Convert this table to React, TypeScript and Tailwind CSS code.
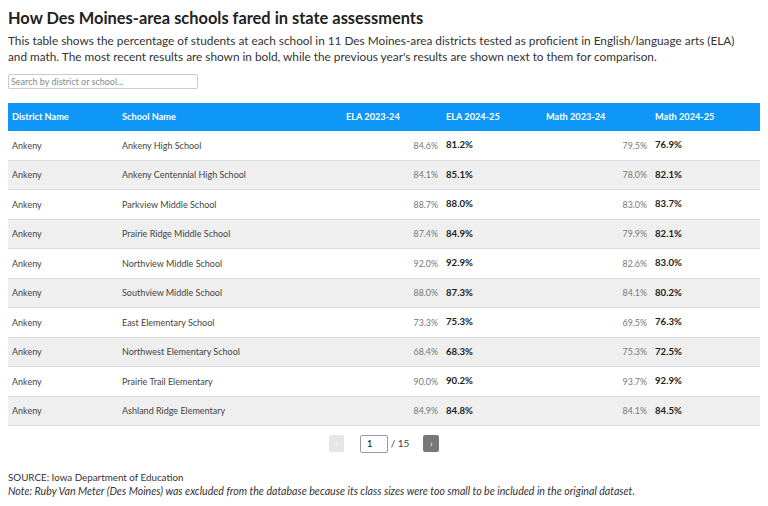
import React from "react";

const rows: [string, string, string, string, string, string][] = [
  ["Ankeny", "Ankeny High School", "84.6%", "81.2%", "79.5%", "76.9%"],
  ["Ankeny", "Ankeny Centennial High School", "84.1%", "85.1%", "78.0%", "82.1%"],
  ["Ankeny", "Parkview Middle School", "88.7%", "88.0%", "83.0%", "83.7%"],
  ["Ankeny", "Prairie Ridge Middle School", "87.4%", "84.9%", "79.9%", "82.1%"],
  ["Ankeny", "Northview Middle School", "92.0%", "92.9%", "82.6%", "83.0%"],
  ["Ankeny", "Southview Middle School", "88.0%", "87.3%", "84.1%", "80.2%"],
  ["Ankeny", "East Elementary School", "73.3%", "75.3%", "69.5%", "76.3%"],
  ["Ankeny", "Northwest Elementary School", "68.4%", "68.3%", "75.3%", "72.5%"],
  ["Ankeny", "Prairie Trail Elementary", "90.0%", "90.2%", "93.7%", "92.9%"],
  ["Ankeny", "Ashland Ridge Elementary", "84.9%", "84.8%", "84.1%", "84.5%"],
];

export default function App() {
  return (
    <div
      className="w-[768px] h-[506px] bg-white text-[#333] px-2 pt-[6px] overflow-hidden"
      style={{ fontFamily: "Lato, 'Noto Sans', sans-serif" }}
    >
      <h1 className="text-[16.4px] leading-[24px] font-bold text-[#222]">
        How Des Moines-area schools fared in state assessments
      </h1>
      <p className="text-[11.8px] leading-[16px] mt-[3px] text-[#333] w-[745px]">
        This table shows the percentage of students at each school in 11 Des Moines-area districts tested as proficient in English/language arts (ELA) and math. The most recent results are shown in bold, while the previous year's results are shown next to them for comparison.
      </p>
      <div className="mt-[9px] w-[190px] h-[15px] border border-[#ccc] rounded-[2px] flex items-center px-[2px] text-[9px] text-[#888]">
        Search by district or school...
      </div>
      <div className="mt-[14px] w-[752px]">
        <div className="grid grid-cols-[110px_224px_100px_100px_109px_109px] h-[28px] bg-[#0e97f6] text-white font-bold text-[9.2px] items-center">
          <div className="pl-[4px]">District Name</div>
          <div className="pl-[4px]">School Name</div>
          <div className="pl-[4px]">ELA 2023-24</div>
          <div className="pl-[4px]">ELA 2024-25</div>
          <div className="pl-[4px]">Math 2023-24</div>
          <div className="pl-[4px]">Math 2024-25</div>
        </div>
        {rows.map((r, i) => (
          <div
            key={i}
            className={`grid grid-cols-[110px_224px_200px_218px] h-[29.5px] items-center text-[9px] text-[#444] border-b border-[#dcdcdc] ${
              i % 2 === 1 ? "bg-[#efefef]" : "bg-white"
            }`}
          >
            <div className="pl-[4px]">{r[0]}</div>
            <div className="pl-[4px]">{r[1]}</div>
            <div className="grid grid-cols-[100px_100px] items-center">
              <div className="text-right pr-[4px] text-[#777] text-[8.8px]">{r[2]}</div>
              <div className="pl-[4px] font-bold text-[9.6px] text-[#222]">{r[3]}</div>
            </div>
            <div className="grid grid-cols-[109px_109px] items-center">
              <div className="text-right pr-[4px] text-[#777] text-[8.8px]">{r[4]}</div>
              <div className="pl-[4px] font-bold text-[9.6px] text-[#222]">{r[5]}</div>
            </div>
          </div>
        ))}
      </div>
      <div className="flex items-center justify-center mt-[8px] h-[19px] text-[10px] text-[#444]">
        <div className="w-[15px] h-[17px] bg-[#e6e6e6] rounded-[2px] flex items-center justify-center text-white text-[9px]">‹</div>
        <div className="ml-[16px] w-[28px] h-[18px] border border-[#999] rounded-[2px] flex items-center pl-[6px] text-[10px] text-[#222]">1</div>
        <div className="ml-[3px]">/ 15</div>
        <div className="ml-[14px] w-[16px] h-[17px] bg-[#777] rounded-[2px] flex items-center justify-center text-white text-[9px]">›</div>
      </div>
      <div className="mt-[17px] text-[9.8px] leading-[14px] text-[#333]">
        SOURCE: Iowa Department of Education
      </div>
      <div className="text-[10.6px] leading-[14px] italic text-[#333]">
        Note: Ruby Van Meter (Des Moines) was excluded from the database because its class sizes were too small to be included in the original dataset.
      </div>
    </div>
  );
}
